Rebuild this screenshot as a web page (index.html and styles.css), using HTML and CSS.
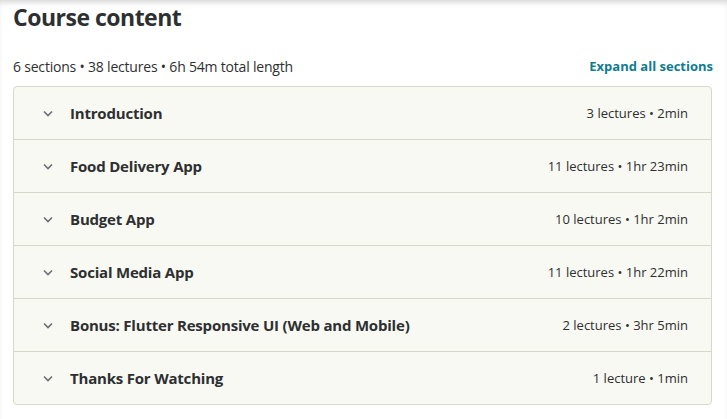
FILE: index.html
```html
<!DOCTYPE html>
<html>
<head>
<meta charset="utf-8">
<link rel="stylesheet" href="styles.css">
</head>
<body>
<div class="page">
  <h2 class="title">Course content</h2>
  <div class="meta-row">
    <span class="meta">6 sections • 38 lectures • 6h 54m total length</span>
    <a class="expand" href="#">Expand all sections</a>
  </div>
  <div class="sections">
    <div class="section"><span class="chev"><svg width="10" height="7" viewBox="0 0 10 7"><path d="M1 1.5 L5 5.5 L9 1.5" fill="none" stroke="#6a6f73" stroke-width="1.6"/></svg></span><span class="name">Introduction</span><span class="info">3 lectures • 2min</span></div>
    <div class="section"><span class="chev"><svg width="10" height="7" viewBox="0 0 10 7"><path d="M1 1.5 L5 5.5 L9 1.5" fill="none" stroke="#6a6f73" stroke-width="1.6"/></svg></span><span class="name">Food Delivery App</span><span class="info">11 lectures • 1hr 23min</span></div>
    <div class="section"><span class="chev"><svg width="10" height="7" viewBox="0 0 10 7"><path d="M1 1.5 L5 5.5 L9 1.5" fill="none" stroke="#6a6f73" stroke-width="1.6"/></svg></span><span class="name">Budget App</span><span class="info">10 lectures • 1hr 2min</span></div>
    <div class="section"><span class="chev"><svg width="10" height="7" viewBox="0 0 10 7"><path d="M1 1.5 L5 5.5 L9 1.5" fill="none" stroke="#6a6f73" stroke-width="1.6"/></svg></span><span class="name">Social Media App</span><span class="info">11 lectures • 1hr 22min</span></div>
    <div class="section"><span class="chev"><svg width="10" height="7" viewBox="0 0 10 7"><path d="M1 1.5 L5 5.5 L9 1.5" fill="none" stroke="#6a6f73" stroke-width="1.6"/></svg></span><span class="name">Bonus: Flutter Responsive UI (Web and Mobile)</span><span class="info">2 lectures • 3hr 5min</span></div>
    <div class="section"><span class="chev"><svg width="10" height="7" viewBox="0 0 10 7"><path d="M1 1.5 L5 5.5 L9 1.5" fill="none" stroke="#6a6f73" stroke-width="1.6"/></svg></span><span class="name">Thanks For Watching</span><span class="info">1 lecture • 1min</span></div>
  </div>
</div>
</body>
</html>
```

FILE: styles.css
```css
html, body {
  margin: 0;
  padding: 0;
  background: #fff;
}
body {
  font-family: "Open Sans", "Noto Sans", sans-serif;
  color: #2d2f31;
  box-shadow: inset 0 5px 6px -3px rgba(0,0,0,0.18);
  min-height: 419px;
}
.page {
  padding: 0 14px 0 13px;
}
.title {
  margin: 0;
  padding-top: 1px;
  font-size: 23px;
  font-weight: 700;
  line-height: 32px;
  letter-spacing: -0.5px;
  color: #2d2f31;
}
.meta-row {
  display: flex;
  justify-content: space-between;
  align-items: center;
  margin-top: 23px;
  height: 20px;
}
.meta {
  font-size: 14px;
  color: #2d2f31;
  letter-spacing: -0.2px;
}
.expand {
  font-size: 13px;
  font-weight: 700;
  color: #0f7c90;
  text-decoration: none;
}
.sections {
  margin-top: 10px;
  margin-right: 1px;
  border: 1px solid #d8d8c8;
  border-radius: 4px;
  background: #f9f9f4;
}
.section {
  display: flex;
  align-items: center;
  height: 52px;
  padding: 0 23px 0 29px;
  border-top: 1px solid #d8d8c8;
}
.section:first-child {
  border-top: none;
}
.chev {
  width: 10px;
  height: 7px;
  display: flex;
  margin-right: 17px;
}
.name {
  flex: 1;
  font-size: 15px;
  font-weight: 700;
  letter-spacing: -0.2px;
}
.info {
  font-size: 13px;
}
```
